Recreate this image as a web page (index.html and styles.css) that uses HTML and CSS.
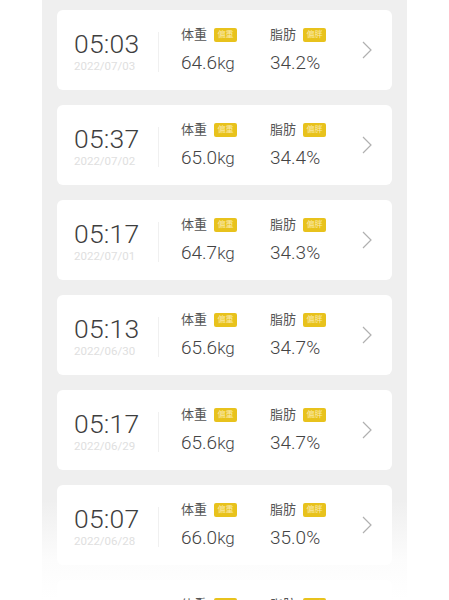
FILE: index.html
```html
<!DOCTYPE html>
<html lang="zh-CN">
<head>
    <meta charset="UTF-8">
    <title>体重记录</title>
    <link rel="stylesheet" href="styles.css">
</head>
<body>
<div class="panel">
    <ul class="list">
        <li class="card">
            <div class="when">
                <div class="time">05:03</div>
                <div class="date">2022/07/03</div>
            </div>
            <i class="line"></i>
            <div class="stats">
                <div class="stat">
                    <div class="label">体重<span class="badge">偏重</span></div>
                    <div class="value">64.6<small>kg</small></div>
                </div>
                <div class="stat">
                    <div class="label">脂肪<span class="badge">偏胖</span></div>
                    <div class="value">34.2%</div>
                </div>
            </div>
            <svg class="arrow" viewBox="0 0 12 20"><path d="M2 2l8 8-8 8"/></svg>
        </li>
        <li class="card">
            <div class="when">
                <div class="time">05:37</div>
                <div class="date">2022/07/02</div>
            </div>
            <i class="line"></i>
            <div class="stats">
                <div class="stat">
                    <div class="label">体重<span class="badge">偏重</span></div>
                    <div class="value">65.0<small>kg</small></div>
                </div>
                <div class="stat">
                    <div class="label">脂肪<span class="badge">偏胖</span></div>
                    <div class="value">34.4%</div>
                </div>
            </div>
            <svg class="arrow" viewBox="0 0 12 20"><path d="M2 2l8 8-8 8"/></svg>
        </li>
        <li class="card">
            <div class="when">
                <div class="time">05:17</div>
                <div class="date">2022/07/01</div>
            </div>
            <i class="line"></i>
            <div class="stats">
                <div class="stat">
                    <div class="label">体重<span class="badge">偏重</span></div>
                    <div class="value">64.7<small>kg</small></div>
                </div>
                <div class="stat">
                    <div class="label">脂肪<span class="badge">偏胖</span></div>
                    <div class="value">34.3%</div>
                </div>
            </div>
            <svg class="arrow" viewBox="0 0 12 20"><path d="M2 2l8 8-8 8"/></svg>
        </li>
        <li class="card">
            <div class="when">
                <div class="time">05:13</div>
                <div class="date">2022/06/30</div>
            </div>
            <i class="line"></i>
            <div class="stats">
                <div class="stat">
                    <div class="label">体重<span class="badge">偏重</span></div>
                    <div class="value">65.6<small>kg</small></div>
                </div>
                <div class="stat">
                    <div class="label">脂肪<span class="badge">偏胖</span></div>
                    <div class="value">34.7%</div>
                </div>
            </div>
            <svg class="arrow" viewBox="0 0 12 20"><path d="M2 2l8 8-8 8"/></svg>
        </li>
        <li class="card">
            <div class="when">
                <div class="time">05:17</div>
                <div class="date">2022/06/29</div>
            </div>
            <i class="line"></i>
            <div class="stats">
                <div class="stat">
                    <div class="label">体重<span class="badge">偏重</span></div>
                    <div class="value">65.6<small>kg</small></div>
                </div>
                <div class="stat">
                    <div class="label">脂肪<span class="badge">偏胖</span></div>
                    <div class="value">34.7%</div>
                </div>
            </div>
            <svg class="arrow" viewBox="0 0 12 20"><path d="M2 2l8 8-8 8"/></svg>
        </li>
        <li class="card">
            <div class="when">
                <div class="time">05:07</div>
                <div class="date">2022/06/28</div>
            </div>
            <i class="line"></i>
            <div class="stats">
                <div class="stat">
                    <div class="label">体重<span class="badge">偏重</span></div>
                    <div class="value">66.0<small>kg</small></div>
                </div>
                <div class="stat">
                    <div class="label">脂肪<span class="badge">偏胖</span></div>
                    <div class="value">35.0%</div>
                </div>
            </div>
            <svg class="arrow" viewBox="0 0 12 20"><path d="M2 2l8 8-8 8"/></svg>
        </li>
        <li class="card">
            <div class="when">
                <div class="time">05:11</div>
                <div class="date">2022/06/27</div>
            </div>
            <i class="line"></i>
            <div class="stats">
                <div class="stat">
                    <div class="label">体重<span class="badge">偏重</span></div>
                    <div class="value">66.1<small>kg</small></div>
                </div>
                <div class="stat">
                    <div class="label">脂肪<span class="badge">偏胖</span></div>
                    <div class="value">35.1%</div>
                </div>
            </div>
            <svg class="arrow" viewBox="0 0 12 20"><path d="M2 2l8 8-8 8"/></svg>
        </li>
    </ul>
</div>
</body>
</html>
```

FILE: styles.css
```css
* {
    padding: 0;
    margin: 0;
    list-style: none;
    box-sizing: border-box;
}

html, body {
    height: 600px;
    overflow: hidden;
    background-color: #fff;
}

body {
    font-family: Roboto, "Noto Sans CJK SC", sans-serif;
    color: #444;
}

.panel {
    width: 365px;
    height: 600px;
    margin: 0 auto;
    padding: 10px 15px 0;
    background: linear-gradient(to bottom, #efefef 0, #efefef 500px, #fcfcfc 560px, #fff 600px);
}

.list {
    display: flex;
    flex-direction: column;
    gap: 15px;
}

.card {
    display: flex;
    align-items: center;
    height: 80px;
    padding-left: 17px;
    background-color: #fff;
    border-radius: 6px;
}

.when {
    width: 84px;
    padding-top: 1px;
}

.time {
    font-size: 26.5px;
    font-weight: 300;
    line-height: 30px;
    letter-spacing: 0.2px;
    color: #3e3e3e;
}

.date {
    font-size: 11.5px;
    line-height: 14px;
    color: #e0e0e0;
}

.line {
    width: 1px;
    height: 40px;
    margin-top: 4px;
    background-color: #f0f0f0;
}

.stats {
    display: flex;
    padding-left: 22px;
    padding-top: 1px;
}

.stat {
    width: 89px;
}

.label {
    display: flex;
    align-items: center;
    gap: 7px;
    font-size: 13px;
    line-height: 16px;
    color: #555;
}

.badge {
    width: 23px;
    height: 14px;
    border-radius: 2px;
    background-color: #e8c21c;
    color: #fbeab0;
    font-size: 8px;
    line-height: 14px;
    text-align: center;
}

.value {
    margin-top: 8px;
    font-size: 19px;
    font-weight: 300;
    line-height: 24px;
    color: #444;
}

.value small {
    font-size: 17px;
}

.arrow {
    width: 12px;
    height: 20px;
    margin-left: 2px;
    fill: none;
    stroke: #b0b0b0;
    stroke-width: 1.2;
}
```
